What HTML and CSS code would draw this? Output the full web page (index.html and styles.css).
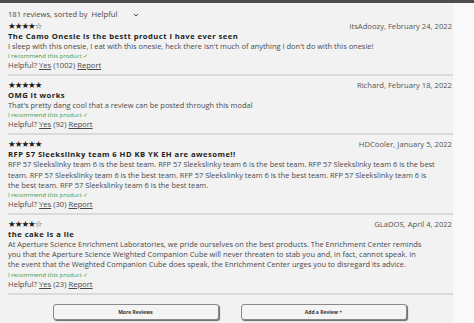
FILE: index.html
```html
<!DOCTYPE html>
<html>
    <head>
        <meta charset="UTF-8" />
        <title>Reviews</title>
        <link rel="stylesheet" href="styles.css">
    </head>
    <body>
        <div class="topbar"></div>
        <div class="panel">
            <div class="sort-row">
                <span>181 reviews, sorted by</span>
                <span class="sort-select">Helpful
                    <svg width="6" height="4" viewBox="0 0 6 4"><path d="M1 1 L3 3 L5 1" fill="none" stroke="#444" stroke-width="1"/></svg>
                </span>
            </div>
            <div class="review-list">
                <div class="review">
                    <div class="review-head">
                        <span class="stars">★★★★☆</span>
                        <span class="author">itsAdoozy, February 24, 2022</span>
                    </div>
                    <div class="review-title">The Camo Onesie is the bestt product I have ever seen</div>
                    <p class="review-body">I sleep with this onesie, I eat with this onesie, heck there isn't much of anything I don't do with this onesie!</p>
                    <div class="recommend">I recommend this product ✓</div>
                    <div class="helpful">Helpful? <a href="#">Yes</a> (1002) <a href="#">Report</a></div>
                </div>
                <div class="review">
                    <div class="review-head">
                        <span class="stars">★★★★★</span>
                        <span class="author">Richard, February 18, 2022</span>
                    </div>
                    <div class="review-title">OMG it works</div>
                    <p class="review-body">That's pretty dang cool that a review can be posted through this modal</p>
                    <div class="recommend">I recommend this product ✓</div>
                    <div class="helpful">Helpful? <a href="#">Yes</a> (92) <a href="#">Report</a></div>
                </div>
                <div class="review">
                    <div class="review-head">
                        <span class="stars">★★★★★</span>
                        <span class="author">HDCooler, January 5, 2022</span>
                    </div>
                    <div class="review-title">RFP 57 Sleekslinky team 6 HD KB YK EH are awesome!!</div>
                    <p class="review-body">RFP 57 Sleekslinky team 6 is the best team. RFP 57 Sleekslinky team 6 is the best team. RFP 57 Sleekslinky team 6 is the best<br>team. RFP 57 Sleekslinky team 6 is the best team. RFP 57 Sleekslinky team 6 is the best team. RFP 57 Sleekslinky team 6 is<br>the best team. RFP 57 Sleekslinky team 6 is the best team.</p>
                    <div class="recommend">I recommend this product ✓</div>
                    <div class="helpful">Helpful? <a href="#">Yes</a> (30) <a href="#">Report</a></div>
                </div>
                <div class="review">
                    <div class="review-head">
                        <span class="stars">★★★★☆</span>
                        <span class="author">GLaDOS, April 4, 2022</span>
                    </div>
                    <div class="review-title">the cake is a lie</div>
                    <p class="review-body">At Aperture Science Enrichment Laboratories, we pride ourselves on the best products. The Enrichment Center reminds<br>you that the Aperture Science Weighted Companion Cube will never threaten to stab you and, in fact, cannot speak. In<br>the event that the Weighted Companion Cube does speak, the Enrichment Center urges you to disregard its advice.</p>
                    <div class="recommend">I recommend this product ✓</div>
                    <div class="helpful">Helpful? <a href="#">Yes</a> (23) <a href="#">Report</a></div>
                </div>
            </div>
            <div class="button-row">
                <button class="modal-btn">More Reviews</button>
                <button class="modal-btn">Add a Review +</button>
            </div>
        </div>
    </body>
</html>
```

FILE: styles.css
```css
body {
    margin: 0;
    background: #f9f9f9;
    font-family: "Open Sans", sans-serif;
    color: #4a4a4a;
    font-size: 7.65px;
}

.topbar {
    height: 3px;
    background: #4d4d4d;
}

.panel {
    width: 453px;
    background: #f2f2f2;
}

.sort-row {
    box-sizing: border-box;
    height: 14px;
    padding: 6px 8px 0;
    line-height: 10px;
}

.sort-select {
    margin-left: 2px;
    color: #444;
}

.sort-select svg {
    margin-left: 14px;
    vertical-align: middle;
}

.review-list {
    height: 279px;
    overflow-y: scroll;
    padding-left: 8px;
}

/* leave room to scroll, like the rest of the list is below */
.review-list::after {
    content: "";
    display: block;
    height: 110px;
}

.review-list::-webkit-scrollbar {
    width: 5px;
}

.review-list::-webkit-scrollbar-thumb {
    background: #c1c1c1;
}

.review-list::-webkit-scrollbar-track {
    background: #f2f2f2;
}

.review {
    padding: 4px 1px 4px 0;
    border-bottom: 2px solid #dadada;
}

.review-head {
    display: flex;
    justify-content: space-between;
    align-items: center;
    height: 10px;
}

.stars {
    font-family: "DejaVu Sans", sans-serif;
    font-size: 8.6px;
    color: #1a1a1a;
    letter-spacing: -1px;
}

.author {
    color: #555;
}

.review-title {
    font-weight: bold;
    color: #222;
    line-height: 10px;
    letter-spacing: 0.45px;
}

.review-body {
    margin: 0;
    font-size: 7.45px;
    line-height: 10.2px;
}

.recommend {
    font-size: 6.1px;
    color: #3f9a3f;
    line-height: 9px;
}

.helpful {
    line-height: 10px;
}

.helpful a {
    color: #4a4a4a;
}

.button-row {
    display: flex;
    justify-content: center;
    gap: 22px;
    padding: 8px 0 3px;
    margin-left: 6px;
}

.modal-btn {
    width: 166px;
    height: 16px;
    border: 1px solid #8a8a8a;
    border-radius: 3px;
    background: #f4f4f4;
    box-shadow: 1px 1px 1px #666;
    font-family: "Open Sans", sans-serif;
    font-size: 5px;
    font-weight: bold;
    color: #333;
    padding: 0;
}
```
